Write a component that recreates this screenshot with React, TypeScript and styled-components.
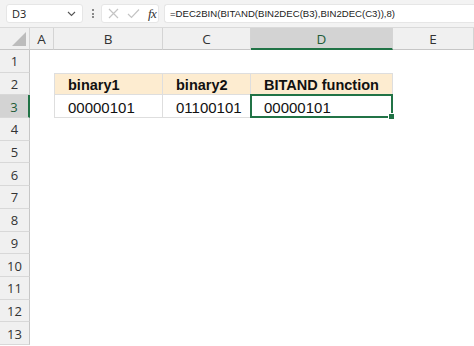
import React from "react";
import styled, { createGlobalStyle } from "styled-components";

const Global = createGlobalStyle`
  html, body { margin: 0; padding: 0; background: #ffffff; }
  body { width: 474px; height: 346px; overflow: hidden; font-family: "Liberation Sans", Arial, sans-serif; }
`;

const GREEN = "#217346";

const Page = styled.div`
  width: 474px;
  height: 346px;
  overflow: hidden;
  display: flex;
  flex-direction: column;
`;

const FormulaBar = styled.div`
  height: 28px;
  box-sizing: border-box;
  background: #f3f3f3;
  border-bottom: 1px solid #dadada;
  display: flex;
  align-items: center;
  padding: 0 0 0 6px;
  gap: 0;
  flex-shrink: 0;
`;

const Box = styled.div<{ $w?: number; $grow?: boolean }>`
  height: 19px;
  box-sizing: border-box;
  background: #ffffff;
  border: 1px solid #e6e6e6;
  border-radius: 3px;
  display: flex;
  align-items: center;
  ${(p) => (p.$w ? `width: ${p.$w}px;` : "")}
  ${(p) => (p.$grow ? "flex: 1; border-right: none; border-radius: 3px 0 0 3px;" : "")}
  flex-shrink: 0;
`;

const NameText = styled.span`
  font-family: "Open Sans", "Liberation Sans", sans-serif;
  font-size: 11px;
  color: #222;
  padding-left: 5px;
  flex: 1;
`;

const Dots = styled.div`
  width: 16px;
  display: flex;
  flex-direction: column;
  align-items: center;
  gap: 1.5px;
  margin-left: 2px;
  margin-right: 0px;
  span {
    width: 2px;
    height: 2px;
    background: #666;
    border-radius: 50%;
  }
`;

const FxBox = styled(Box)`
  justify-content: flex-start;
  gap: 0;
  padding-left: 6px;
  margin-left: 0px;
`;

const Fx = styled.span`
  font-family: "Liberation Serif", "Times New Roman", serif;
  font-style: italic;
  font-size: 13px;
  color: #333;
  margin-left: 8px;
  letter-spacing: -0.5px;
`;

const FormulaText = styled.span`
  font-family: "Liberation Sans", Arial, sans-serif;
  font-size: 9.6px;
  color: #222;
  padding-left: 5px;
  white-space: nowrap;
`;

const Grid = styled.div`
  display: grid;
  grid-template-columns: 30px 24px 109px 88px 142px 1fr;
  grid-template-rows: 22px;
  grid-auto-rows: 22.7px;
  flex: 1;
  overflow: hidden;
`;

const Corner = styled.div`
  background: #f0f0f0;
  border-right: 1px solid #d4d4d4;
  border-bottom: 1px solid #c6c6c6;
  box-sizing: border-box;
  display: flex;
  align-items: flex-end;
  justify-content: flex-end;
  padding: 0 3px 3px 0;
`;

const ColHead = styled.div<{ $sel?: boolean }>`
  box-sizing: border-box;
  background: ${(p) => (p.$sel ? "#d3d3d3" : "#f0f0f0")};
  border-right: 1px solid #d4d4d4;
  border-bottom: ${(p) => (p.$sel ? `2px solid ${GREEN}` : "1px solid #c6c6c6")};
  display: flex;
  align-items: center;
  justify-content: center;
  font-family: "Open Sans", "Liberation Sans", sans-serif;
  font-size: 13.5px;
  color: ${(p) => (p.$sel ? "#1f5c38" : "#333")};
  padding-top: ${(p) => (p.$sel ? "1px" : "0")};
`;

const RowHead = styled.div<{ $sel?: boolean }>`
  box-sizing: border-box;
  background: ${(p) => (p.$sel ? "#d3d3d3" : "#f0f0f0")};
  border-bottom: 1px solid #d8d8d8;
  border-right: ${(p) => (p.$sel ? `2px solid ${GREEN}` : "1px solid #c6c6c6")};
  display: flex;
  align-items: center;
  justify-content: center;
  font-family: "Open Sans", "Liberation Sans", sans-serif;
  font-size: 13px;
  color: ${(p) => (p.$sel ? "#1f5c38" : "#333")};
  padding-top: 1px;
`;

const Cell = styled.div<{ $fill?: string; $table?: boolean; $first?: boolean; $top?: boolean; $bold?: boolean; $sel?: boolean }>`
  box-sizing: border-box;
  position: relative;
  background: ${(p) => p.$fill || "#ffffff"};
  display: flex;
  align-items: center;
  padding: 2px 0 0 13px;
  font-family: "Liberation Sans", Arial, sans-serif;
  font-size: ${(p) => (p.$bold ? "14.5px" : "15px")};
  font-weight: ${(p) => (p.$bold ? 700 : 400)};
  color: #111;
  white-space: nowrap;
  ${(p) =>
    p.$table
      ? `border-right: 1px solid #dedede; border-bottom: 1px solid #dedede;
         ${p.$first ? "border-left: 1px solid #dedede;" : ""}
         ${p.$top ? "border-top: 1px solid #dedede;" : ""}`
      : ""}
  ${(p) =>
    p.$sel
      ? `&::after {
          content: "";
          position: absolute;
          left: -1px; top: -1px; right: -1px; bottom: -1px;
          border: 2px solid ${GREEN};
        }
        &::before {
          content: "";
          position: absolute;
          right: -3px; bottom: -3px;
          width: 5px; height: 5px;
          background: ${GREEN};
          border: 1px solid #fff;
          z-index: 2;
        }`
      : ""}
`;

const cols = ["A", "B", "C", "D", "E"];
const HEAD_FILL = "#fdecd0";

const Chevron = () => (
  <svg width="9" height="6" viewBox="0 0 9 6" style={{ marginRight: 6 }}>
    <path d="M1 1 L4.5 4.5 L8 1" fill="none" stroke="#555" strokeWidth="1.1" />
  </svg>
);

const XIcon = () => (
  <svg width="11" height="11" viewBox="0 0 11 11">
    <path d="M1 1 L10 10 M10 1 L1 10" stroke="#c4c4c4" strokeWidth="1.2" fill="none" />
  </svg>
);

const CheckIcon = () => (
  <svg width="13" height="11" viewBox="0 0 13 11" style={{ marginLeft: 8 }}>
    <path d="M1 6 L4.5 9.5 L12 1.5" stroke="#c4c4c4" strokeWidth="1.2" fill="none" />
  </svg>
);

const Triangle = () => (
  <svg width="14" height="14" viewBox="0 0 14 14">
    <path d="M14 0 L14 14 L0 14 Z" fill="#bcbcbc" />
  </svg>
);

export default function App() {
  const rows = Array.from({ length: 13 }, (_, i) => i + 1);
  const content: Record<string, { text: string; bold?: boolean }> = {
    B2: { text: "binary1", bold: true },
    C2: { text: "binary2", bold: true },
    D2: { text: "BITAND function", bold: true },
    B3: { text: "00000101" },
    C3: { text: "01100101" },
    D3: { text: "00000101" },
  };
  return (
    <Page>
      <Global />
      <FormulaBar>
        <Box $w={77}>
          <NameText>D3</NameText>
          <Chevron />
        </Box>
        <Dots>
          <span />
          <span />
          <span />
        </Dots>
        <FxBox $w={58}>
          <XIcon />
          <CheckIcon />
          <Fx>fx</Fx>
        </FxBox>
        <Box $grow style={{ marginLeft: 5 }}>
          <FormulaText>=DEC2BIN(BITAND(BIN2DEC(B3),BIN2DEC(C3)),8)</FormulaText>
        </Box>
      </FormulaBar>
      <Grid>
        <Corner>
          <Triangle />
        </Corner>
        {cols.map((c) => (
          <ColHead key={c} $sel={c === "D"}>
            {c}
          </ColHead>
        ))}
        {rows.map((r) => (
          <React.Fragment key={r}>
            <RowHead $sel={r === 3}>{r}</RowHead>
            {cols.map((c) => {
              const id = `${c}${r}`;
              const inTable = (r === 2 || r === 3) && (c === "B" || c === "C" || c === "D");
              const v = content[id];
              return (
                <Cell
                  key={id}
                  $table={inTable}
                  $first={inTable && c === "B"}
                  $top={inTable && r === 2}
                  $fill={inTable && r === 2 ? HEAD_FILL : undefined}
                  $bold={v?.bold}
                  $sel={id === "D3"}
                >
                  {v?.text}
                </Cell>
              );
            })}
          </React.Fragment>
        ))}
      </Grid>
    </Page>
  );
}
